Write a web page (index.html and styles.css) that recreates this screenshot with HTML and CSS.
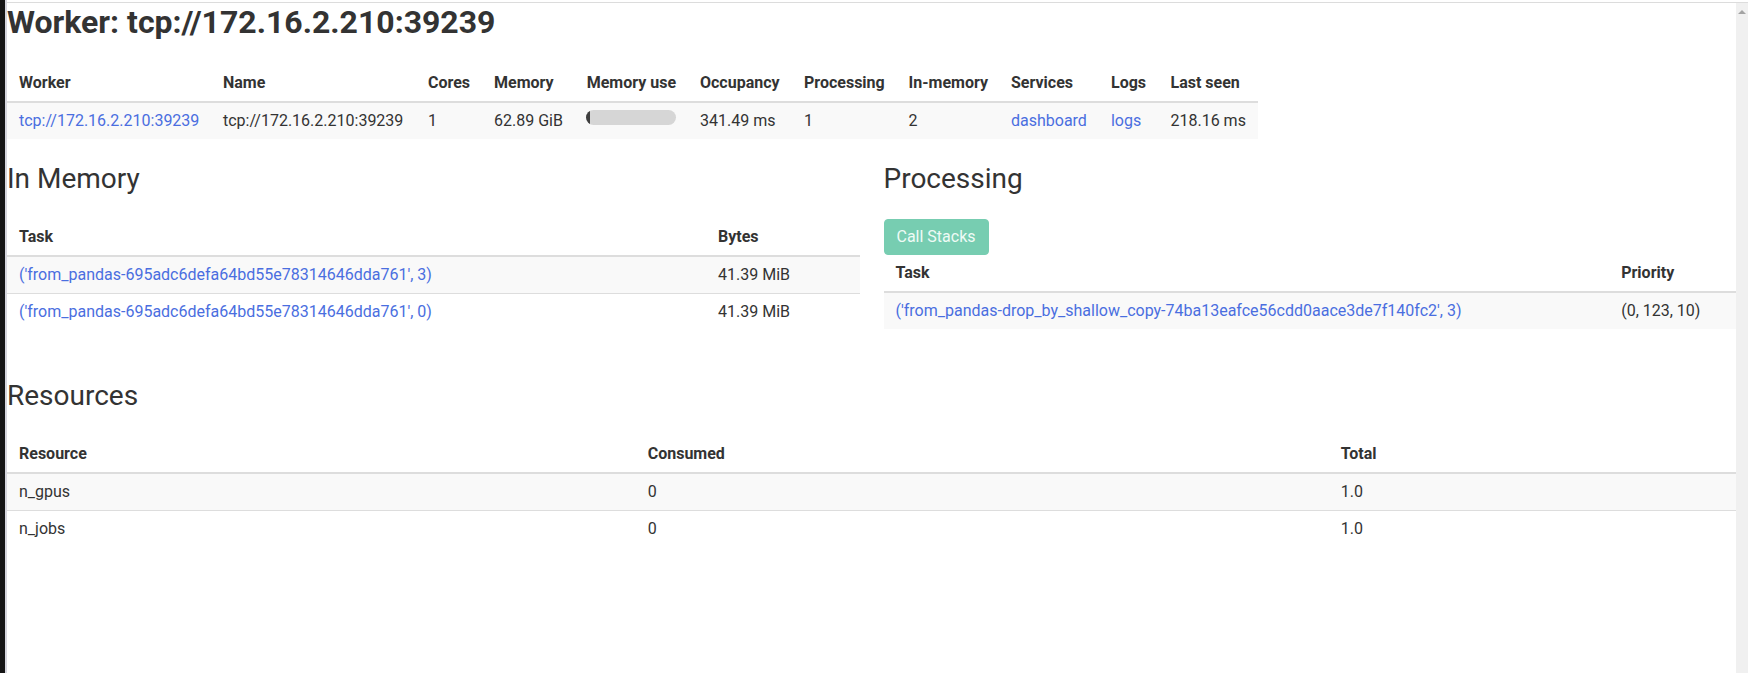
FILE: index.html
```html
<!DOCTYPE html>
<html lang="en">
<head>
<meta charset="utf-8">
<title>Worker: tcp://172.16.2.210:39239</title>
<link rel="stylesheet" href="styles.css">
</head>
<body>
<div class="strip"></div>
<div class="window">
  <div class="viewport">
    <main class="page">
      <h1 class="title">Worker: tcp://172.16.2.210:39239</h1>

      <table class="table striped worker-table">
        <colgroup>
          <col class="w-worker"><col class="w-name"><col class="w-cores"><col class="w-memory"><col class="w-memuse"><col class="w-occ"><col class="w-proc"><col class="w-inmem"><col class="w-services"><col class="w-logs"><col>
        </colgroup>
        <thead>
          <tr>
            <th>Worker</th><th>Name</th><th>Cores</th><th>Memory</th><th>Memory use</th><th>Occupancy</th><th>Processing</th><th>In-memory</th><th>Services</th><th>Logs</th><th>Last seen</th>
          </tr>
        </thead>
        <tbody>
          <tr>
            <td><a href="#">tcp://172.16.2.210:39239</a></td>
            <td>tcp://172.16.2.210:39239</td>
            <td>1</td>
            <td>62.89 GiB</td>
            <td><div class="membar"><div class="membar-fill"></div></div></td>
            <td>341.49 ms</td>
            <td>1</td>
            <td>2</td>
            <td><a href="#">dashboard</a></td>
            <td><a href="#">logs</a></td>
            <td>218.16 ms</td>
          </tr>
        </tbody>
      </table>

      <div class="split">
        <section class="col">
          <h2>In Memory</h2>
          <table class="table striped">
            <colgroup><col class="w-mem-task"><col></colgroup>
            <thead><tr><th>Task</th><th>Bytes</th></tr></thead>
            <tbody>
              <tr><td><a href="#">('from_pandas-695adc6defa64bd55e78314646dda761', 3)</a></td><td>41.39 MiB</td></tr>
              <tr><td><a href="#">('from_pandas-695adc6defa64bd55e78314646dda761', 0)</a></td><td>41.39 MiB</td></tr>
            </tbody>
          </table>
        </section>
        <section class="col">
          <h2>Processing</h2>
          <button class="btn" type="button">Call Stacks</button>
          <table class="table striped">
            <colgroup><col class="w-proc-task"><col></colgroup>
            <thead><tr><th>Task</th><th>Priority</th></tr></thead>
            <tbody>
              <tr><td><a href="#">('from_pandas-drop_by_shallow_copy-74ba13eafce56cdd0aace3de7f140fc2', 3)</a></td><td>(0, 123, 10)</td></tr>
            </tbody>
          </table>
        </section>
      </div>

      <section class="resources">
        <h2>Resources</h2>
        <table class="table striped">
          <colgroup><col class="w-res"><col class="w-cons"><col></colgroup>
          <thead><tr><th>Resource</th><th>Consumed</th><th>Total</th></tr></thead>
          <tbody>
            <tr><td>n_gpus</td><td>0</td><td>1.0</td></tr>
            <tr><td>n_jobs</td><td>0</td><td>1.0</td></tr>
          </tbody>
        </table>
      </section>
    </main>
    <div class="scrollbar">
      <svg class="scroll-arrow" width="12" height="10" viewBox="0 0 12 10"><polygon points="2,7 6,3 10,7" fill="#a3a3a3"/></svg>
    </div>
  </div>
</div>
</body>
</html>
```
FILE: styles.css
```css
* { box-sizing: border-box; }
html, body {
  margin: 0;
  padding: 0;
  height: 673px;
  overflow: hidden;
  background: #fff;
}
body {
  display: flex;
  font-family: Roboto, "Liberation Sans", sans-serif;
  font-size: 16px;
  line-height: 20px;
  color: #333;
}
.strip {
  width: 7px;
  flex: none;
  background: #151515;
  border-right: 2px solid #d6d6de;
}
.window {
  flex: 1;
  display: flex;
  flex-direction: column;
  padding-top: 2px;
  min-width: 0;
}
.viewport {
  flex: 1;
  display: flex;
  border-top: 1px solid #dcdcdc;
  min-height: 0;
}
.page {
  flex: 1;
  min-width: 0;
}
.scrollbar {
  width: 12px;
  flex: none;
  background: #f0f0f0;
  padding-top: 4px;
}
.scroll-arrow { display: block; }

.title {
  margin: 2px 0 25px;
  font-size: 32px;
  line-height: 35px;
  font-weight: 700;
  color: #333;
}
h2 {
  margin: 24px 0 25px;
  font-size: 28px;
  line-height: 31px;
  font-weight: 400;
  color: #333;
}
a { color: #4a6ee0; text-decoration: none; }

.table {
  border-collapse: collapse;
  border-spacing: 0;
  width: 100%;
  table-layout: fixed;
}
.table th, .table td {
  padding: 8px 12px;
  text-align: left;
  vertical-align: top;
  white-space: nowrap;
  line-height: 20px;
}
.table th {
  font-weight: 700;
  border-bottom: 2px solid #ddd;
}
.table td { border-top: 1px solid #ddd; }
.table tbody tr:first-child td { border-top: 0; }
.striped tbody tr:nth-child(odd) { background: #f9f9f9; }

.worker-table { width: 1250.5px; }
.w-worker { width: 204px; }
.w-name { width: 205px; }
.w-cores { width: 66px; }
.w-memory { width: 92.7px; }
.w-memuse { width: 113.3px; }
.w-occ { width: 104px; }
.w-proc { width: 104.6px; }
.w-inmem { width: 102.4px; }
.w-services { width: 100px; }
.w-logs { width: 59.5px; }

.membar {
  width: 90px;
  height: 15px;
  margin: -1.5px 0 0 -1px;
  border-radius: 8px;
  background: #d6d6d6;
  overflow: hidden;
}
.membar-fill {
  width: 4px;
  height: 100%;
  background: #3f3f3f;
}

.split {
  display: grid;
  grid-template-columns: 1fr 1fr;
  column-gap: 24px;
}
.col { min-width: 0; }
.w-mem-task { width: 699px; }
.w-proc-task { width: 725.7px; }

.btn {
  display: block;
  margin: 0;
  padding: 7px 12px;
  font-family: inherit;
  font-size: 16px;
  line-height: 20px;
  color: #effbf6;
  background: #77cdb1;
  border: 1px solid #77cdb1;
  border-radius: 4px;
}

.resources { padding-top: 26px; }
.w-res { width: 628.7px; }
.w-cons { width: 693px; }
```
